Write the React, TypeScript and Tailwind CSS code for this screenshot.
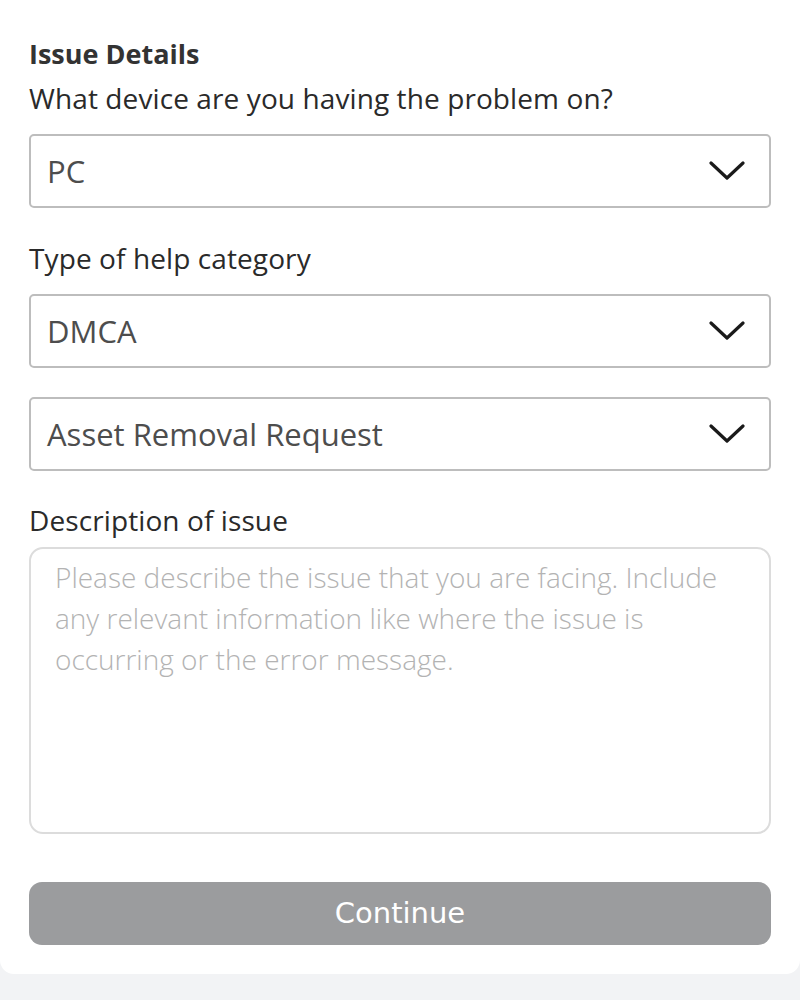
import React from "react";

const Chevron = () => (
  <svg width="36" height="20" viewBox="0 0 36 20" fill="none" className="shrink-0">
    <path d="M2 2 L18 17 L34 2" stroke="#1a1a1a" strokeWidth="3.2" strokeLinecap="round" strokeLinejoin="round" />
  </svg>
);

const SelectBox = ({ value }: { value: string }) => (
  <div className="flex h-[74px] items-center justify-between rounded-[5px] border-2 border-[#bdbdbd] bg-white pl-[16px] pr-[24px]">
    <span className="text-[31px] text-[#4d4d4d]">{value}</span>
    <Chevron />
  </div>
);

export default function App() {
  return (
    <div className="min-h-[1000px] bg-[#f2f3f5]" style={{ fontFamily: "'Open Sans', sans-serif" }}>
      <div className="rounded-b-[14px] bg-white px-[29px] pt-[36px] pb-[29px]">
        <h2 className="text-[27px] font-bold leading-[36px] text-[#333]">Issue Details</h2>
        <div className="mt-[8px] text-[28px] leading-[36px] tracking-[0.1px] text-[#2a2a2a]">What device are you having the problem on?</div>
        <div className="mt-[18px]">
          <SelectBox value="PC" />
        </div>
        <div className="mt-[32px] text-[28px] leading-[36px] tracking-[0.1px] text-[#2a2a2a]">Type of help category</div>
        <div className="mt-[18px]">
          <SelectBox value="DMCA" />
        </div>
        <div className="mt-[29px]">
          <SelectBox value="Asset Removal Request" />
        </div>
        <div className="mt-[31px] text-[28px] leading-[36px] tracking-[0.1px] text-[#2a2a2a]">Description of issue</div>
        <textarea
          className="mt-[9px] block h-[287px] w-full resize-none rounded-[14px] border-2 border-[#dcdcdc] pl-[24px] pr-[20px] pt-[8px] text-[28px] font-light leading-[41px] text-[#333] outline-none placeholder:text-[#b3b3b3]"
          placeholder="Please describe the issue that you are facing. Include any relevant information like where the issue is occurring or the error message."
        />
        <button className="mt-[48px] flex h-[63px] w-full items-center justify-center rounded-[13px] bg-[#9b9c9e] text-[29px] text-white" style={{ fontFamily: "'DejaVu Sans', sans-serif" }}>
          Continue
        </button>
      </div>
    </div>
  );
}
